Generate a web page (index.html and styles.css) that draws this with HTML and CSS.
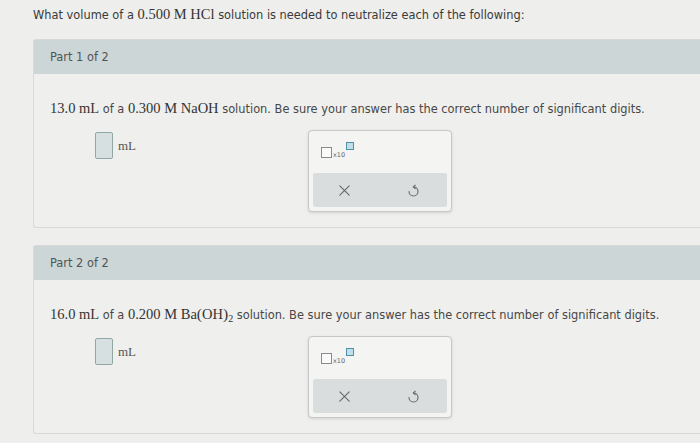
FILE: index.html
```html
<!DOCTYPE html>
<html>
<head>
<meta charset="utf-8">
<link rel="stylesheet" href="styles.css">
</head>
<body>
<div class="page">
  <p class="title">What volume of a <span class="m">0.500 M HCl</span> solution is needed to neutralize each of the following:</p>

  <section class="part">
    <div class="part-head">Part 1 of 2</div>
    <div class="part-body">
      <p class="q"><span class="m">13.0 mL</span> of a <span class="m">0.300 M NaOH</span> solution. Be sure your answer has the correct number of significant digits.</p>
      <div class="answer-row">
        <div class="ans"><span class="box"></span><span class="unit">mL</span></div>
        <div class="tools">
          <div class="tools-top">
            <span class="sci"><span class="sq"></span><span class="x10">x10</span><span class="sup"></span></span>
          </div>
          <div class="tools-btns">
            <svg class="ic" viewBox="0 0 16 16"><path d="M3 3 L13 13 M13 3 L3 13"/></svg>
            <svg class="ic" viewBox="0 0 16 16"><path d="M8 4.2 A4.8 4.8 0 1 1 3.2 9"/><path d="M9.8 2.4 L7.8 4.2 L9.8 6"/></svg>
          </div>
        </div>
      </div>
    </div>
  </section>

  <section class="part">
    <div class="part-head">Part 2 of 2</div>
    <div class="part-body">
      <p class="q"><span class="m">16.0 mL</span> of a <span class="m">0.200 M Ba<span class="par">(</span>OH<span class="par">)</span><sub>2</sub></span> solution. Be sure your answer has the correct number of significant digits.</p>
      <div class="answer-row">
        <div class="ans"><span class="box"></span><span class="unit">mL</span></div>
        <div class="tools">
          <div class="tools-top">
            <span class="sci"><span class="sq"></span><span class="x10">x10</span><span class="sup"></span></span>
          </div>
          <div class="tools-btns">
            <svg class="ic" viewBox="0 0 16 16"><path d="M3 3 L13 13 M13 3 L3 13"/></svg>
            <svg class="ic" viewBox="0 0 16 16"><path d="M8 4.2 A4.8 4.8 0 1 1 3.2 9"/><path d="M9.8 2.4 L7.8 4.2 L9.8 6"/></svg>
          </div>
        </div>
      </div>
    </div>
  </section>
</div>
</body>
</html>
```

FILE: styles.css
```css
html, body {
  margin: 0;
  padding: 0;
  background: #eeeeec;
}
.page {
  width: 700px;
  height: 443px;
  overflow: hidden;
  padding: 7px 0 0 33px;
  box-sizing: border-box;
  font-family: "DejaVu Sans", Verdana, sans-serif;
  font-size: 11.4px;
  color: #474747;
  display: flex;
  flex-direction: column;
  gap: 17px;
}
.title {
  margin: 0;
  height: 15px;
  line-height: 15px;
  white-space: nowrap;
  color: #3a3a3a;
}
.m {
  font-family: "Liberation Serif", "Times New Roman", serif;
  font-size: 14.5px;
  color: #333;
}
.par { font-size: 15.5px; }
sub { font-size: 10px; vertical-align: -3px; line-height: 0; }
.part {
  width: 690px;
  border: 1px solid #d9d9d7;
  border-right: none;
  border-radius: 3px 0 0 3px;
  background: #efefed;
  flex-shrink: 0;
}
.part-head {
  height: 34px;
  background: #cdd6d6;
  padding-left: 16px;
  display: flex;
  align-items: center;
  color: #4e5555;
}
.part-body {
  padding: 26px 0 15px 16px;
  display: flex;
  flex-direction: column;
  gap: 13px;
}
.q {
  margin: 0;
  line-height: 16px;
  white-space: nowrap;
}
.answer-row {
  display: flex;
  align-items: flex-start;
}
.ans {
  width: 213px;
  margin-left: 45px;
  margin-top: 2px;
  display: flex;
  align-items: flex-start;
  gap: 5px;
}
.box {
  width: 16px;
  height: 25px;
  background: #d6e0e0;
  border: 1px solid #93a6a6;
  border-radius: 2px;
}
.unit {
  font-family: "Liberation Serif", "Times New Roman", serif;
  font-size: 13px;
  color: #555;
  margin-top: 6px;
}
.tools {
  width: 144px;
  height: 82px;
  box-sizing: border-box;
  background: #f4f4f3;
  border: 1px solid #c8c8c8;
  border-radius: 4px;
  box-shadow: 0 1px 3px rgba(0,0,0,0.12);
  display: flex;
  flex-direction: column;
  padding: 0 4px 4px 4px;
}
.tools-top {
  height: 42px;
  padding: 11px 0 0 8px;
  box-sizing: border-box;
}
.sci {
  display: inline-flex;
  align-items: flex-end;
  height: 16px;
}
.sq {
  width: 9px;
  height: 9px;
  border: 1px solid #8a8a8a;
  background: #fafafa;
}
.x10 {
  font-size: 6.5px;
  color: #666;
  line-height: 6px;
  margin-left: 1px;
}
.sup {
  width: 6px;
  height: 6px;
  border: 1px solid #4f8fa8;
  background: #bfe0ea;
  align-self: flex-start;
  margin-left: 1px;
}
.tools-btns {
  flex: 1;
  background: #d9dddd;
  border-radius: 2px;
  display: flex;
  align-items: center;
  padding-left: 24px;
  gap: 54px;
}
.ic {
  width: 15px;
  height: 15px;
  fill: none;
  stroke: #666a6c;
  stroke-width: 1.2;
  stroke-linecap: round;
  stroke-linejoin: round;
}
```
